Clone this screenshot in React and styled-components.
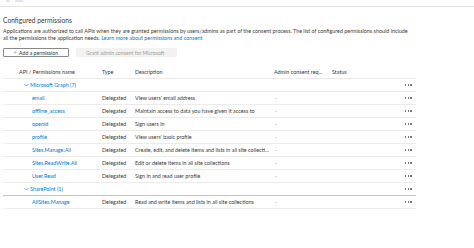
import React from "react";
import styled, { createGlobalStyle } from "styled-components";

const Global = createGlobalStyle`
  html, body { margin: 0; padding: 0; background: #ffffff; }
  body { font-family: "Lato", "Open Sans", sans-serif; color: #323130; }
`;

const Page = styled.div`
  width: 474px;
  height: 248px;
  overflow: hidden;
  background: #fff;
`;

const TopBar = styled.div`
  height: 6px;
  border-bottom: 1px solid #e6e5e4;
  display: flex;
  align-items: flex-start;
  gap: 5px;
  padding-left: 6px;
`;

const TopIcon = styled.span`
  width: ${(p) => p.$w}px;
  height: 2px;
  background: #c9d6e6;
  opacity: 0.6;
`;

const Content = styled.div`
  padding: 0 0 0 3px;
`;

const Title = styled.h2`
  margin: 9px 0 0 0;
  font-size: 6.7px;
  line-height: 8px;
  font-weight: 400;
  color: #3b3a39;
`;

const Intro = styled.p`
  margin: 4px 0 0 0;
  font-size: 5.4px;
  line-height: 7px;
  color: #3b3a39;
  width: 411px;
`;

const Link = styled.a`
  color: #0078d4;
  text-decoration: none;
`;

const Buttons = styled.div`
  display: flex;
  gap: 7px;
  margin-top: 6px;
`;

const Button = styled.button`
  height: 9px;
  padding: 0 0 0 9px;
  font-family: inherit;
  font-size: 5.2px;
  display: flex;
  align-items: center;
  gap: 2px;
  border: 1px solid ${(p) => (p.$disabled ? "#f3f2f1" : "#8a8886")};
  background: ${(p) => (p.$disabled ? "#f3f2f1" : "#ffffff")};
  color: ${(p) => (p.$disabled ? "#a19f9d" : "#323130")};
  border-radius: 1px;
  box-sizing: border-box;
  width: ${(p) => p.$w}px;
  white-space: nowrap;
`;

const Plus = styled.span`
  color: #8aaed6;
  font-size: 7px;
  line-height: 7px;
  margin-top: -1px;
`;

const Table = styled.div`
  margin-top: 9px;
  width: 413px;
`;

const Row = styled.div`
  display: grid;
  grid-template-columns: 99px 33px 139px 58px 1fr 14px;
  height: 13px;
  align-items: center;
  box-sizing: border-box;
  border-bottom: 1px solid ${(p) => (p.$strong ? "#c8c6c4" : "#edebe9")};
  font-size: 5.4px;
  color: #3b3a39;
`;

const Cell = styled.div`
  white-space: nowrap;
  overflow: hidden;
  text-overflow: ellipsis;
  padding-left: ${(p) => p.$indent || 0}px;
  padding-right: 4px;
  color: ${(p) => (p.$link ? "#0078d4" : p.$muted ? "#8a8886" : "#3b3a39")};
`;

const GroupCell = styled.div`
  grid-column: 1 / 6;
  padding-left: 21px;
  color: #0078d4;
  display: flex;
  align-items: center;
  gap: 1px;
`;

const Chevron = styled.svg`
  width: 5px;
  height: 4px;
`;

const More = styled.div`
  display: flex;
  gap: 1.5px;
  padding-left: 3px;
`;

const Dot = styled.span`
  width: 1.2px;
  height: 1.2px;
  background: #7a7876;
`;

const Dots = () => (
  <More>
    <Dot />
    <Dot />
    <Dot />
  </More>
);

const groups = [
  {
    name: "Microsoft Graph (7)",
    items: [
      ["email", "View users' email address"],
      ["offline_access", "Maintain access to data you have given it access to"],
      ["openid", "Sign users in"],
      ["profile", "View users' basic profile"],
      ["Sites.Manage.All", "Create, edit, and delete items and lists in all site collections"],
      ["Sites.ReadWrite.All", "Edit or delete items in all site collections"],
      ["User.Read", "Sign in and read user profile"],
    ],
  },
  {
    name: "SharePoint (1)",
    items: [["AllSites.Manage", "Read and write items and lists in all site collections"]],
  },
];

export default function App() {
  return (
    <Page>
      <Global />
      <TopBar>
        <TopIcon $w={4} />
        <TopIcon $w={8} />
      </TopBar>
      <Content>
        <Title>Configured permissions</Title>
        <Intro>
          Applications are authorized to call APIs when they are granted permissions by users/admins as part of the consent process. The list of configured permissions should include all the permissions the application needs.{" "}
          <Link href="#">Learn more about permissions and consent</Link>
        </Intro>
        <Buttons>
          <Button $w={66}>
            <Plus>+</Plus>Add a permission
          </Button>
          <Button $disabled $w={101}>Grant admin consent for Microsoft</Button>
        </Buttons>
        <Table>
          <Row>
            <Cell $indent={16}>API / Permissions name</Cell>
            <Cell>Type</Cell>
            <Cell>Description</Cell>
            <Cell>Admin consent req...</Cell>
            <Cell>Status</Cell>
            <div />
          </Row>
          {groups.map((g, gi) => (
            <React.Fragment key={g.name}>
              <Row $strong={gi === 1}>
                <GroupCell>
                  <Chevron viewBox="0 0 10 6">
                    <path d="M1 1 L5 5 L9 1" fill="none" stroke="#0078d4" strokeWidth="1.2" />
                  </Chevron>
                  {g.name}
                </GroupCell>
                <Dots />
              </Row>
              {g.items.map(([n, d]) => (
                <Row key={n}>
                  <Cell $indent={29} $link>{n}</Cell>
                  <Cell>Delegated</Cell>
                  <Cell>{d}</Cell>
                  <Cell $muted $indent={1}>-</Cell>
                  <Cell />
                  <Dots />
                </Row>
              ))}
            </React.Fragment>
          ))}
        </Table>
      </Content>
    </Page>
  );
}
